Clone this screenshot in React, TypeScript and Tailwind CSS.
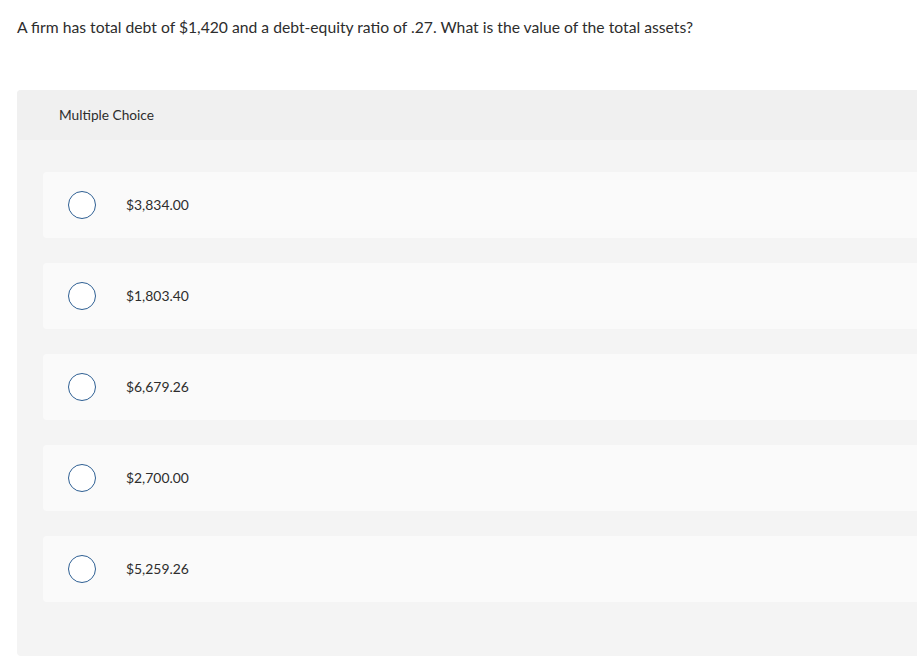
import React from "react";

const choices = ["$3,834.00", "$1,803.40", "$6,679.26", "$2,700.00", "$5,259.26"];

const App: React.FC = () => {
  return (
    <div
      className="min-h-screen w-[917px] overflow-hidden bg-white text-[#2d2d2d]"
      style={{ fontFamily: "Lato, 'Liberation Sans', sans-serif" }}
    >
      <p className="pl-[17px] pt-[17px] text-[15.7px] leading-[20px]">
        A firm has total debt of $1,420 and a debt-equity ratio of .27. What is the value of the total assets?
      </p>

      <div className="ml-[17px] mt-[53px] w-[940px] rounded bg-[#f4f4f4]">
        <div className="flex h-[50px] items-center rounded-t bg-[#f0f0f0] pl-[42px] text-[13.7px]">
          Multiple Choice
        </div>
        <div className="flex flex-col gap-[25px] pb-[54px] pl-[26px] pt-[32px]">
          {choices.map((c) => (
            <div key={c} className="flex h-[66px] items-center rounded bg-[#fafafa] pl-[25px]">
              <span className="h-[28px] w-[28px] shrink-0 rounded-full border-[1.5px] border-[#2e5f93] bg-white" />
              <span className="ml-[30px] text-[13.9px]">{c}</span>
            </div>
          ))}
        </div>
      </div>
    </div>
  );
};

export default App;
